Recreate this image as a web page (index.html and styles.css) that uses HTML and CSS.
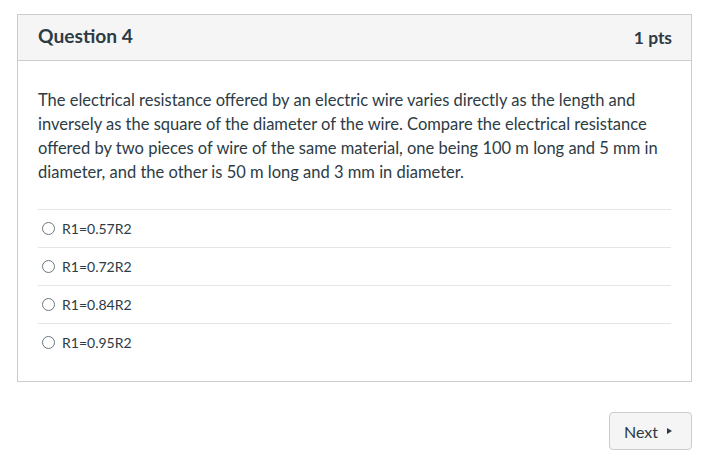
FILE: index.html
```html
<!DOCTYPE html>
<html>
<head>
<meta charset="utf-8">
<link rel="stylesheet" href="styles.css">
</head>
<body>
<div class="page">
  <div class="card">
    <div class="head">
      <div class="title">Question 4</div>
      <div class="pts">1 pts</div>
    </div>
    <div class="body">
      <p class="text">The electrical resistance offered by an electric wire varies directly as the length and inversely as the square of the diameter of the wire. Compare the electrical resistance offered by two pieces of wire of the same material, one being 100 m long and 5 mm in diameter, and the other is 50 m long and 3 mm in diameter.</p>
      <div class="answers">
        <div class="ans"><span class="radio"></span><span>R1=0.57R2</span></div>
        <div class="ans"><span class="radio"></span><span>R1=0.72R2</span></div>
        <div class="ans"><span class="radio"></span><span>R1=0.84R2</span></div>
        <div class="ans"><span class="radio"></span><span>R1=0.95R2</span></div>
      </div>
    </div>
  </div>
  <div class="nav">
    <button class="next">Next <span class="tri"></span></button>
  </div>
</div>
</body>
</html>
```
FILE: styles.css
```css
html, body { margin: 0; padding: 0; background: #fff; }
body { font-family: Lato, "Noto Sans", sans-serif; color: #2d3b45; }
.page { padding: 14px 0 0 17px; }
.card { border: 1px solid #c7cdd1; width: 675px; box-sizing: border-box; }
.head { display: flex; justify-content: space-between; align-items: center; background: #f5f5f5; border-bottom: 1px solid #c7cdd1; height: 45px; padding: 0 19px 0 20px; }
.title { font-size: 19.2px; font-weight: 700; color: #2d3b45; margin-top: -4px; }
.pts { font-size: 17.4px; font-weight: 700; color: #2d3b45; }
.body { padding: 27px 20px 20px 20px; }
.text { margin: 0 0 25px 0; font-size: 16.5px; line-height: 24px; color: #2d3b45; }
.answers { border-top: 1px solid #e3e6e8; }
.ans { display: flex; align-items: center; height: 37px; border-bottom: 1px solid #e3e6e8; font-size: 14px; padding-left: 4px; gap: 7px; }
.ans:last-child { border-bottom: none; }
.radio { width: 11px; height: 11px; border: 1px solid #6b7780; border-radius: 50%; display: inline-block; background: #fff; }
.nav { display: flex; justify-content: flex-end; padding-top: 30px; width: 675px; }
.next { font-family: Lato, "Noto Sans", sans-serif; font-size: 16px; color: #2d3b45; background: #f5f5f5; border: 1px solid #c7cdd1; border-radius: 4px; height: 38px; width: 83px; padding: 0 0 0 14px; display: flex; align-items: center; gap: 9px; }
.tri { width: 0; height: 0; border-left: 5px solid #2d3b45; border-top: 3.5px solid transparent; border-bottom: 3.5px solid transparent; }
```
